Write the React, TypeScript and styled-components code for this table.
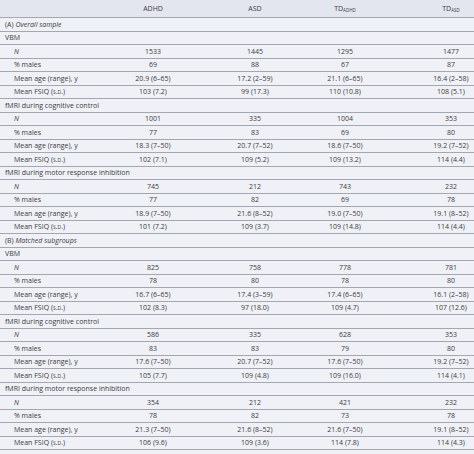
import React from "react";
import styled, { createGlobalStyle } from "styled-components";

const GlobalStyle = createGlobalStyle`
  html, body {
    margin: 0;
    padding: 0;
    background: #eff1f7;
  }
`;

const Table = styled.div`
  width: 474px;
  font-family: "Open Sans", "Noto Sans", sans-serif;
  font-size: 7px;
  color: #3c3c3c;
  background: #eff1f7;
`;

const Row = styled.div<{ $head?: boolean }>`
  display: grid;
  grid-template-columns: 103px 100px 104px 76px 1fr;
  align-items: center;
  height: ${(p) => (p.$head ? "17px" : "12.5px")};
  border-bottom: 1px solid #a3a7b0;
  background: ${(p) => (p.$head ? "#e3e6ef" : "#eff1f7")};
`;

const Label = styled.div<{ $indent?: boolean }>`
  padding-left: ${(p) => (p.$indent ? "14px" : "5px")};
  white-space: nowrap;
`;

const SectionLabel = styled.div`
  grid-column: 1 / -1;
  padding-left: 5px;
  white-space: nowrap;
`;

const Cell = styled.div<{ $last?: boolean }>`
  text-align: center;
  white-space: nowrap;
  padding-left: ${(p) => (p.$last ? "45px" : "0")};
`;

const Em = styled.i``;

const Sub = styled.sub`
  font-size: 4.5px;
  vertical-align: -1px;
`;

const SmallCaps = styled.span`
  font-variant: small-caps;
`;

type Group = { name: string; rows: string[][] };
type Section = { tag: string; title: string; groups: Group[] };

const sections: Section[] = [
  {
    tag: "(A)",
    title: "Overall sample",
    groups: [
      {
        name: "VBM",
        rows: [
          ["1533", "1445", "1295", "1477"],
          ["69", "88", "67", "87"],
          ["20.9 (6–65)", "17.2 (2–59)", "21.1 (6–65)", "16.4 (2–58)"],
          ["103 (7.2)", "99 (17.3)", "110 (10.8)", "108 (5.1)"],
        ],
      },
      {
        name: "fMRI during cognitive control",
        rows: [
          ["1001", "335", "1004", "353"],
          ["77", "83", "69", "80"],
          ["18.3 (7–50)", "20.7 (7–52)", "18.6 (7–50)", "19.2 (7–52)"],
          ["102 (7.1)", "109 (5.2)", "109 (13.2)", "114 (4.4)"],
        ],
      },
      {
        name: "fMRI during motor response inhibition",
        rows: [
          ["745", "212", "743", "232"],
          ["77", "82", "69", "78"],
          ["18.9 (7–50)", "21.6 (8–52)", "19.0 (7–50)", "19.1 (8–52)"],
          ["101 (7.2)", "109 (3.7)", "109 (14.8)", "114 (4.4)"],
        ],
      },
    ],
  },
  {
    tag: "(B)",
    title: "Matched subgroups",
    groups: [
      {
        name: "VBM",
        rows: [
          ["825", "758", "778", "781"],
          ["78", "80", "78", "80"],
          ["16.7 (6–65)", "17.4 (3–59)", "17.4 (6–65)", "16.1 (2–58)"],
          ["102 (8.3)", "97 (18.0)", "109 (4.7)", "107 (12.6)"],
        ],
      },
      {
        name: "fMRI during cognitive control",
        rows: [
          ["586", "335", "628", "353"],
          ["83", "83", "79", "80"],
          ["17.6 (7–50)", "20.7 (7–52)", "17.6 (7–50)", "19.2 (7–52)"],
          ["105 (7.7)", "109 (4.8)", "109 (16.0)", "114 (4.1)"],
        ],
      },
      {
        name: "fMRI during motor response inhibition",
        rows: [
          ["354", "212", "421", "232"],
          ["78", "82", "73", "78"],
          ["21.3 (7–50)", "21.6 (8–52)", "21.6 (7–50)", "19.1 (8–52)"],
          ["106 (9.6)", "109 (3.6)", "114 (7.8)", "114 (4.3)"],
        ],
      },
    ],
  },
];

const rowLabels: React.ReactNode[] = [
  <Em>N</Em>,
  "% males",
  "Mean age (range), y",
  <>
    Mean FSIQ (<SmallCaps>s.d.</SmallCaps>)
  </>,
];

export default function App() {
  return (
    <>
      <GlobalStyle />
      <Table>
        <Row $head>
          <Label />
          <Cell>ADHD</Cell>
          <Cell>ASD</Cell>
          <Cell>
            TD<Sub>ADHD</Sub>
          </Cell>
          <Cell $last>
            TD<Sub>ASD</Sub>
          </Cell>
        </Row>
        {sections.map((s) => (
          <React.Fragment key={s.tag}>
            <Row>
              <SectionLabel>
                {s.tag} <Em>{s.title}</Em>
              </SectionLabel>
            </Row>
            {s.groups.map((g) => (
              <React.Fragment key={g.name}>
                <Row>
                  <SectionLabel>{g.name}</SectionLabel>
                </Row>
                {g.rows.map((vals, i) => (
                  <Row key={i}>
                    <Label $indent>{rowLabels[i]}</Label>
                    {vals.map((v, j) => (
                      <Cell key={j} $last={j === 3}>
                        {v}
                      </Cell>
                    ))}
                  </Row>
                ))}
              </React.Fragment>
            ))}
          </React.Fragment>
        ))}
      </Table>
    </>
  );
}
